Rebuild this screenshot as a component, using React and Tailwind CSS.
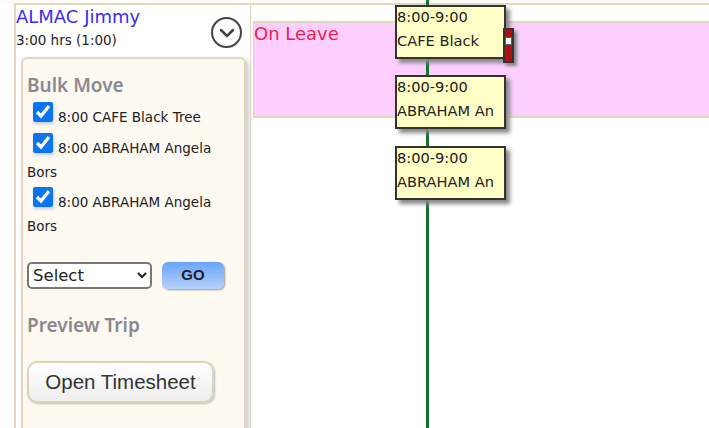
import React from "react";
import { ChevronDown } from "lucide-react";

const bookings = [
  { id: 1, client: "CAFE Black", top: "top-[5px]", flag: true },
  { id: 2, client: "ABRAHAM An", top: "top-[75px]" },
  { id: 3, client: "ABRAHAM An", top: "top-[146px]" },
];

const moves = [
  { id: 1, label: "8:00 CAFE Black Tree" },
  { id: 2, label: "8:00 ABRAHAM Angela Bors" },
  { id: 3, label: "8:00 ABRAHAM Angela Bors" },
];

function Booking({ client, top, flag }) {
  return (
    <div className={`absolute left-[395px] w-[111px] h-[54px] ${top} bg-[#ffffc6] border-2 border-[#333] shadow-[4px_4px_4px_#888] text-[14.6px] leading-[24px] text-[#222] whitespace-nowrap`}>
      <div className="-mt-[2px]">8:00-9:00</div>
      <div>{client}</div>
      {flag && (
        <div className="absolute left-[106px] top-[21px] w-[11px] h-[35px] bg-[#b01010] border-2 border-[#333] shadow-[3px_3px_3px_#888] flex flex-col items-center pt-[3px] gap-px">
          <div className="w-[7px] h-[3px] border border-[#722]" />
          <div className="w-[7px] h-[8px] bg-white border border-[#557]" />
        </div>
      )}
    </div>
  );
}

export default function App() {
  return (
    <div className="relative w-[709px] h-[428px] overflow-hidden bg-white font-['DejaVu_Sans',sans-serif]">
      <div className="h-[3px] bg-[#fdfbf5]" />
      <div className="ml-[14px] h-[425px] border-l-2 border-t-2 border-[#e2d6bf] flex">
        <div className="w-[235px] shrink-0 border-r border-[#e2d6bf]">
          <div className="h-[52px] relative">
            <div className="text-[18px] leading-[22px] text-[#3a2cf0] pt-px">ALMAC Jimmy</div>
            <div className="text-[13.5px] leading-[18px] text-[#222] mt-[3px]">3:00 hrs (1:00)</div>
            <div className="absolute left-[195px] top-[12px] w-[31px] h-[31px] rounded-full border-[2.5px] border-[#444] flex items-center justify-center">
              <ChevronDown className="w-[24px] h-[24px] text-[#444]" strokeWidth={2.5} />
            </div>
          </div>
          <div className="ml-[5px] mr-[4px] h-[400px] rounded-t-md border-2 border-[#e2d6bf] bg-[#fef9f1] shadow-[3px_3px_5px_#ccc] px-[4px] pt-[13px]">
            <h3 className="font-['Noto_Sans',sans-serif] text-[19px] leading-[26px] font-semibold text-[#8a8a8e]">Bulk Move</h3>
            <div className="mt-px text-[13.5px] leading-[24px] text-[#222]">
              {moves.map((m) => (
                <div key={m.id} className="pt-[3px] first:mb-px">
                  <input type="checkbox" defaultChecked className="w-[20px] h-[20px] ml-[6px] mr-[5px] accent-[#0b74f1] align-baseline shadow-[1px_2px_3px_#ccc]" />
                  {m.label}
                </div>
              ))}
            </div>
            <div className="flex items-center gap-[10px] mt-[24px]">
              <select className="w-[125px] h-[27px] bg-white border-2 border-[#777] rounded-[5px] text-[16.5px] text-[#222]">
                <option>Select</option>
              </select>
              <button className="w-[62px] h-[27px] rounded-[6px] bg-gradient-to-b from-[#6ba3fb] to-[#b5d2fb] shadow-[1px_1px_2px_#999] font-['Liberation_Sans',sans-serif] text-[15px] font-bold text-[#222]">GO</button>
            </div>
            <h3 className="mt-[23px] font-['Noto_Sans',sans-serif] text-[19px] leading-[26px] font-semibold text-[#8a8a8e]">Preview Trip</h3>
            <button className="mt-[23px] w-[187px] h-[42px] rounded-[10px] border-2 border-[#d9d5b8] bg-gradient-to-b from-white to-[#eeeeee] shadow-[1px_1px_2px_#bbb] font-['Liberation_Sans',sans-serif] text-[20.5px] text-[#333]">Open Timesheet</button>
          </div>
        </div>
        <div className="flex-1 pt-[16px] pl-[2px]">
          <div className="h-[97px] bg-[#fccfff] border-y-2 border-l border-[#ddd7bd] text-[18px] leading-[22px] text-[#f02050]">On Leave</div>
        </div>
      </div>
      <div className="absolute left-[426px] top-0 w-[3px] h-[428px] bg-[#17702e]" />
      {bookings.map((b) => (
        <Booking key={b.id} {...b} />
      ))}
    </div>
  );
}
